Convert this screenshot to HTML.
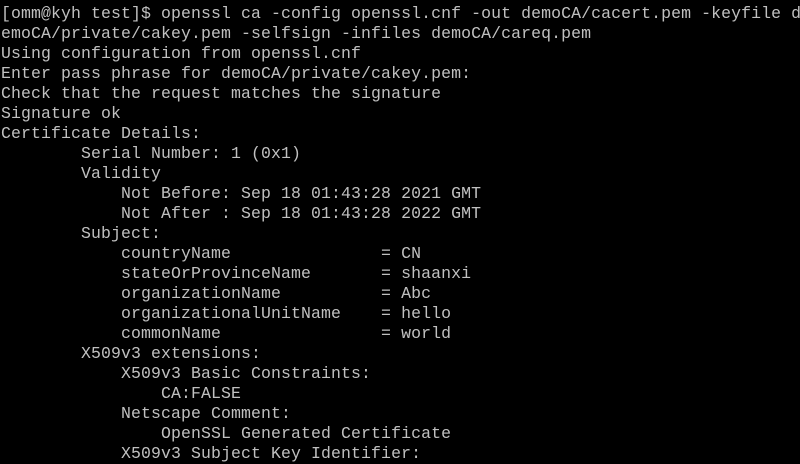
<!DOCTYPE html>
<html><head><style>
html,body{margin:0;padding:0;background:#000;width:800px;height:464px;overflow:hidden}
pre{margin:0;padding:4px 0 0 1px;font-family:"Liberation Mono",monospace;font-size:16.5px;line-height:20px;color:#c0c0c0;white-space:pre;letter-spacing:0.1px}
</style></head><body><pre>[omm@kyh test]$ openssl ca -config openssl.cnf -out demoCA/cacert.pem -keyfile d
emoCA/private/cakey.pem -selfsign -infiles demoCA/careq.pem
Using configuration from openssl.cnf
Enter pass phrase for demoCA/private/cakey.pem:
Check that the request matches the signature
Signature ok
Certificate Details:
        Serial Number: 1 (0x1)
        Validity
            Not Before: Sep 18 01:43:28 2021 GMT
            Not After : Sep 18 01:43:28 2022 GMT
        Subject:
            countryName               = CN
            stateOrProvinceName       = shaanxi
            organizationName          = Abc
            organizationalUnitName    = hello
            commonName                = world
        X509v3 extensions:
            X509v3 Basic Constraints:
                CA:FALSE
            Netscape Comment:
                OpenSSL Generated Certificate
            X509v3 Subject Key Identifier:</pre></body></html>
